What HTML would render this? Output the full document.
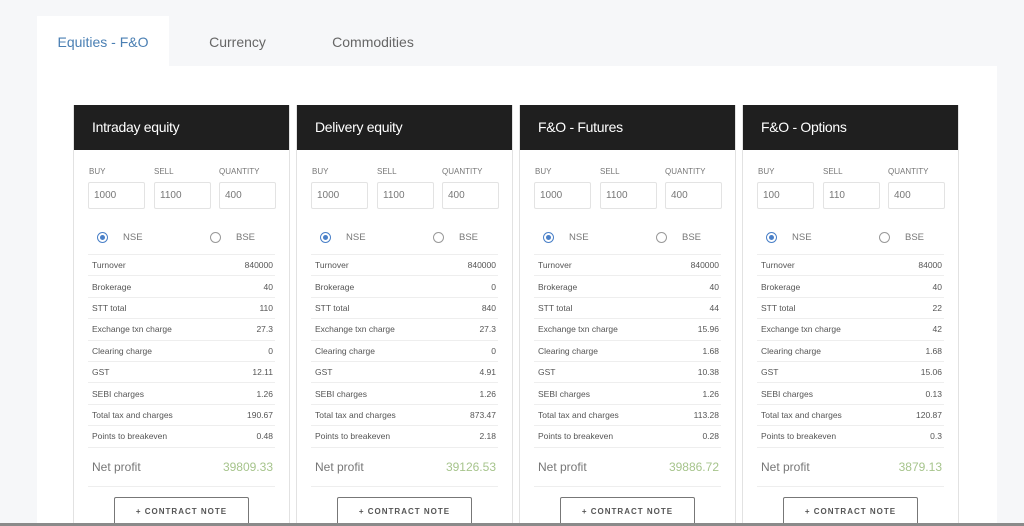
<!DOCTYPE html>
<html style="height:526px;overflow:hidden"><head><meta charset="utf-8"><style>
*{box-sizing:border-box;margin:0;padding:0}
body{width:1024px;height:526px;overflow:hidden;background:#f6f7f9;font-family:"Liberation Sans",sans-serif;position:relative;color:#555}
.tab{position:absolute;top:16px;height:50px;line-height:52px;font-size:14px;color:#666;text-align:center}
.tab.a{background:#fff;color:#4a7fb3;left:37px;width:132px}
.panel{position:absolute;left:37px;top:66px;width:960px;height:460px;background:#fff}
.card{position:absolute;top:105px;width:217px;height:421px;border:1px solid #e2e2e2;border-top:none;border-bottom:none;background:#fff;overflow:hidden}
.hd{height:45px;background:#1f1f1f;color:#fff;font-size:14px;line-height:45px;padding-left:19px;margin:0 -1px;letter-spacing:-0.3px}
.lbl{position:absolute;top:62px;font-size:8px;color:#777}
.in{position:absolute;top:77px;width:57px;height:27px;border:1px solid #e3e3e3;border-radius:2px;font-size:10px;color:#777;line-height:26px;padding-left:5px}
.rad{position:absolute;top:127px;width:11px;height:11px;border-radius:50%;border:1px solid #999}
.rad.on{border-color:#4a80c8}
.rad.on::after{content:"";position:absolute;left:2px;top:2px;width:5px;height:5px;border-radius:50%;background:#4a80c8}
.rt{position:absolute;top:127px;font-size:9.5px;color:#777}
.rows{position:absolute;left:14px;right:14px;top:149px}
.r{height:21.4px;border-top:1px solid #eee;display:flex;justify-content:space-between;align-items:center;font-size:8.5px;color:#555;padding:0 2px 0 4px}
.np{height:40px;border-top:1px solid #eee;border-bottom:1px solid #eee;display:flex;justify-content:space-between;align-items:center;padding:0 2px 0 4px;font-size:12px;color:#777}
.np b{font-weight:normal;color:#a6c48c}
.btn{position:absolute;left:40px;top:392px;width:135px;height:40px;border:1px solid #777;border-radius:2px;text-align:center;font-size:8px;letter-spacing:1px;font-weight:bold;color:#555;padding-top:9px}
.bar{position:absolute;left:0;top:523px;width:1024px;height:3px;background:#8a8a8a}
</style></head><body>
<div class="tab a">Equities - F&amp;O</div>
<div class="tab" style="left:190px;width:95px">Currency</div>
<div class="tab" style="left:318px;width:110px">Commodities</div>
<div class="panel"></div>

<div class="card" style="left:73px">
<div class="hd">Intraday equity</div>
<div class="lbl" style="left:15px">BUY</div><div class="lbl" style="left:80px">SELL</div><div class="lbl" style="left:145px">QUANTITY</div>
<div class="in" style="left:14px">1000</div><div class="in" style="left:80px">1100</div><div class="in" style="left:145px">400</div>
<div class="rad on" style="left:23px"></div><div class="rt" style="left:49px">NSE</div>
<div class="rad" style="left:136px"></div><div class="rt" style="left:162px">BSE</div>
<div class="rows">
<div class="r"><span>Turnover</span><span>840000</span></div>
<div class="r"><span>Brokerage</span><span>40</span></div>
<div class="r"><span>STT total</span><span>110</span></div>
<div class="r"><span>Exchange txn charge</span><span>27.3</span></div>
<div class="r"><span>Clearing charge</span><span>0</span></div>
<div class="r"><span>GST</span><span>12.11</span></div>
<div class="r"><span>SEBI charges</span><span>1.26</span></div>
<div class="r"><span>Total tax and charges</span><span>190.67</span></div>
<div class="r"><span>Points to breakeven</span><span>0.48</span></div>
<div class="np"><span>Net profit</span><b>39809.33</b></div>
</div>
<div class="btn">+ CONTRACT NOTE</div>
</div>

<div class="card" style="left:296px">
<div class="hd">Delivery equity</div>
<div class="lbl" style="left:15px">BUY</div><div class="lbl" style="left:80px">SELL</div><div class="lbl" style="left:145px">QUANTITY</div>
<div class="in" style="left:14px">1000</div><div class="in" style="left:80px">1100</div><div class="in" style="left:145px">400</div>
<div class="rad on" style="left:23px"></div><div class="rt" style="left:49px">NSE</div>
<div class="rad" style="left:136px"></div><div class="rt" style="left:162px">BSE</div>
<div class="rows">
<div class="r"><span>Turnover</span><span>840000</span></div>
<div class="r"><span>Brokerage</span><span>0</span></div>
<div class="r"><span>STT total</span><span>840</span></div>
<div class="r"><span>Exchange txn charge</span><span>27.3</span></div>
<div class="r"><span>Clearing charge</span><span>0</span></div>
<div class="r"><span>GST</span><span>4.91</span></div>
<div class="r"><span>SEBI charges</span><span>1.26</span></div>
<div class="r"><span>Total tax and charges</span><span>873.47</span></div>
<div class="r"><span>Points to breakeven</span><span>2.18</span></div>
<div class="np"><span>Net profit</span><b>39126.53</b></div>
</div>
<div class="btn">+ CONTRACT NOTE</div>
</div>

<div class="card" style="left:519px">
<div class="hd">F&amp;O - Futures</div>
<div class="lbl" style="left:15px">BUY</div><div class="lbl" style="left:80px">SELL</div><div class="lbl" style="left:145px">QUANTITY</div>
<div class="in" style="left:14px">1000</div><div class="in" style="left:80px">1100</div><div class="in" style="left:145px">400</div>
<div class="rad on" style="left:23px"></div><div class="rt" style="left:49px">NSE</div>
<div class="rad" style="left:136px"></div><div class="rt" style="left:162px">BSE</div>
<div class="rows">
<div class="r"><span>Turnover</span><span>840000</span></div>
<div class="r"><span>Brokerage</span><span>40</span></div>
<div class="r"><span>STT total</span><span>44</span></div>
<div class="r"><span>Exchange txn charge</span><span>15.96</span></div>
<div class="r"><span>Clearing charge</span><span>1.68</span></div>
<div class="r"><span>GST</span><span>10.38</span></div>
<div class="r"><span>SEBI charges</span><span>1.26</span></div>
<div class="r"><span>Total tax and charges</span><span>113.28</span></div>
<div class="r"><span>Points to breakeven</span><span>0.28</span></div>
<div class="np"><span>Net profit</span><b>39886.72</b></div>
</div>
<div class="btn">+ CONTRACT NOTE</div>
</div>

<div class="card" style="left:742px">
<div class="hd">F&amp;O - Options</div>
<div class="lbl" style="left:15px">BUY</div><div class="lbl" style="left:80px">SELL</div><div class="lbl" style="left:145px">QUANTITY</div>
<div class="in" style="left:14px">100</div><div class="in" style="left:80px">110</div><div class="in" style="left:145px">400</div>
<div class="rad on" style="left:23px"></div><div class="rt" style="left:49px">NSE</div>
<div class="rad" style="left:136px"></div><div class="rt" style="left:162px">BSE</div>
<div class="rows">
<div class="r"><span>Turnover</span><span>84000</span></div>
<div class="r"><span>Brokerage</span><span>40</span></div>
<div class="r"><span>STT total</span><span>22</span></div>
<div class="r"><span>Exchange txn charge</span><span>42</span></div>
<div class="r"><span>Clearing charge</span><span>1.68</span></div>
<div class="r"><span>GST</span><span>15.06</span></div>
<div class="r"><span>SEBI charges</span><span>0.13</span></div>
<div class="r"><span>Total tax and charges</span><span>120.87</span></div>
<div class="r"><span>Points to breakeven</span><span>0.3</span></div>
<div class="np"><span>Net profit</span><b>3879.13</b></div>
</div>
<div class="btn">+ CONTRACT NOTE</div>
</div>

<div class="bar"></div>
</body></html>
